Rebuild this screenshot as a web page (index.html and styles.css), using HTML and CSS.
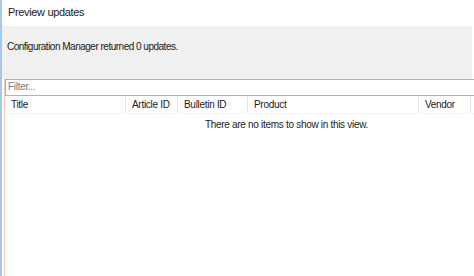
FILE: index.html
```html
<!DOCTYPE html>
<html>
<head>
<meta charset="utf-8">
<link rel="stylesheet" href="styles.css">
</head>
<body>
<div class="frame">
  <div class="accent"></div>
  <div class="main">
    <div class="title">Preview updates</div>
    <div class="info">Configuration Manager returned 0 updates.</div>
    <div class="list">
      <div class="filter">Filter...</div>
      <div class="header">
        <div class="col c-title">Title</div>
        <div class="col c-article">Article ID</div>
        <div class="col c-bulletin">Bulletin ID</div>
        <div class="col c-product">Product</div>
        <div class="col c-vendor">Vendor</div>
        <div class="col c-rest"></div>
      </div>
      <div class="empty">There are no items to show in this view.</div>
    </div>
  </div>
</div>
</body>
</html>
```
FILE: styles.css
```css
html, body {
  margin: 0;
  padding: 0;
  background: #ffffff;
}
body {
  width: 474px;
  height: 276px;
  overflow: hidden;
  font-family: "Liberation Sans", Arial, sans-serif;
  font-size: 10px;
  color: #1a1a1a;
}
.frame {
  display: flex;
  height: 276px;
}
.accent {
  width: 2px;
  background: #a6c9ea;
  flex: none;
}
.main {
  flex: 1;
  display: flex;
  flex-direction: column;
  min-width: 0;
}
.title {
  height: 26px;
  line-height: 24px;
  padding-left: 6px;
  font-size: 11px;
  letter-spacing: -0.35px;
}
.info {
  height: 53px;
  box-sizing: border-box;
  background: #f0f0f0;
  margin-right: 2px;
  padding-left: 5px;
  line-height: 42px;
  letter-spacing: -0.5px;
}
.list {
  flex: 1;
  margin-left: 2px;
  border-left: 1px solid #f0c4bc;
}
.filter {
  height: 17px;
  box-sizing: border-box;
  border: 1px solid #a9b2bd;
  border-right: none;
  padding-left: 2px;
  line-height: 14px;
  color: #7a7a7a;
  letter-spacing: -0.3px;
}
.header {
  display: flex;
  height: 17px;
  border-bottom: 1px solid #f4f4f4;
  letter-spacing: -0.3px;
}
.col {
  box-sizing: border-box;
  padding-left: 6px;
  line-height: 18px;
  border-right: 1px solid #e6e6e6;
  flex: none;
}
.c-title { width: 121px; padding-left: 6px; }
.c-article { width: 52px; }
.c-bulletin { width: 70px; }
.c-product { width: 171px; }
.c-vendor { width: 52px; }
.c-rest { flex: 1; border-right: none; }
.empty {
  text-align: center;
  padding-left: 94px;
  line-height: 14px;
  margin-top: 4px;
  letter-spacing: -0.3px;
}
```
